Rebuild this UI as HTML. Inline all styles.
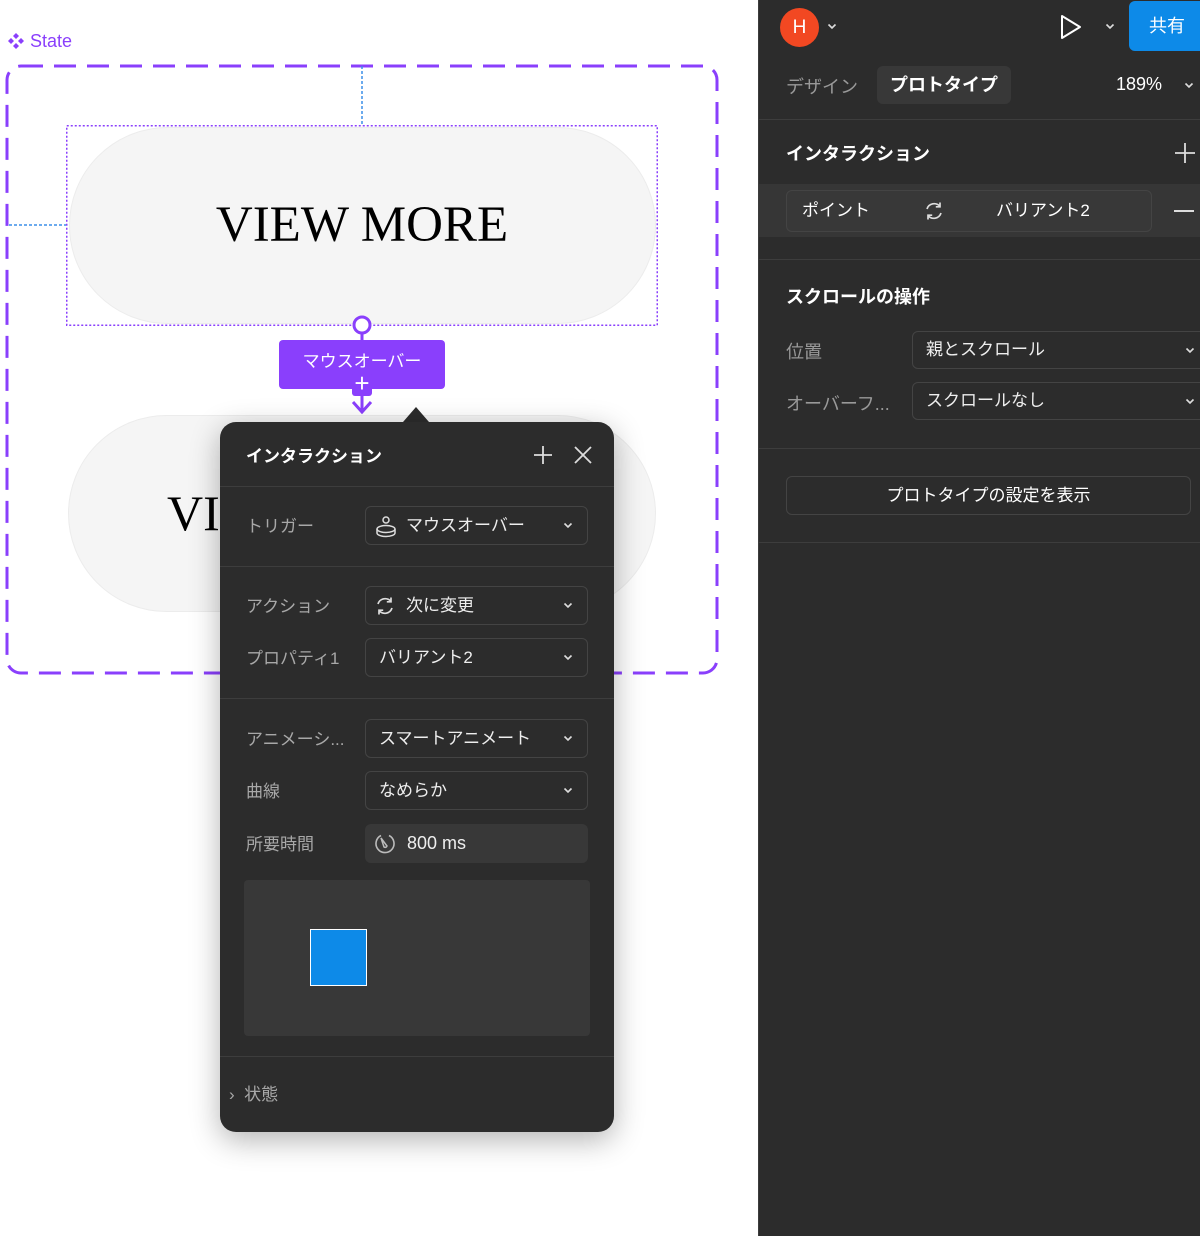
<!DOCTYPE html><html><head><meta charset="utf-8"><style>
*{margin:0;padding:0;box-sizing:border-box}
body{width:1200px;height:1236px;background:#fff;position:relative;overflow:hidden;font-family:"Liberation Sans","Noto Sans CJK JP",sans-serif}
.a{position:absolute}
.pill{position:absolute;background:#f5f5f5;border:1px solid #ececec;border-radius:100px}
.serif{font-family:"Liberation Serif",serif;color:#000}
.pop{left:220px;top:422px;width:394px;height:710px;background:#2c2c2c;border-radius:16px;box-shadow:0 8px 30px rgba(0,0,0,.3);color:#fff;font-size:17px}
.lbl{position:absolute;left:26px;color:#a8a8a8;font-size:17px;margin-top:-2px}
.sel{position:absolute;left:145px;width:223px;height:39px;border:1px solid #444;border-radius:6px;color:#eee;font-size:17px;line-height:38px;padding-left:13px}
.ch{position:absolute;right:14px;top:15px}
.rsel{position:absolute;left:153px;width:300px;height:38px;border:1px solid #444;border-radius:6px;color:#eee;font-size:17px;line-height:36px;padding-left:13px}
.hr{position:absolute;left:0;right:0;height:1px;background:#3d3d3d}
.right{left:758px;top:0;width:442px;height:1236px;background:#2c2c2c;border-left:1px solid #3d3d3d;color:#fff}
</style></head><body>
<svg width="0" height="0" style="position:absolute"><defs><symbol id="cv" viewBox="0 0 10 7"><path d="M1.5 1.5 L5 5 L8.5 1.5" fill="none" stroke="#ddd" stroke-width="1.6"/></symbol>
<symbol id="rf" viewBox="0 0 22 22"><path d="M4 9 A7.5 7.5 0 0 1 17 6.5 M17 2.5 V6.8 H12.8 M18 13 A7.5 7.5 0 0 1 5 15.5 M5 19.5 V15.2 H9.2" fill="none" stroke="#ddd" stroke-width="1.7"/></symbol></defs></svg>
<svg class="a" style="left:7px;top:32px" width="18" height="18" viewBox="0 0 18 18"><g fill="#8a3ffc"><path d="M9 1 L12 4 L9 7 L6 4Z"/><path d="M9 11 L12 14 L9 17 L6 14Z"/><path d="M4 6 L7 9 L4 12 L1 9Z"/><path d="M14 6 L17 9 L14 12 L11 9Z"/></g></svg>
<div class="a" style="left:30px;top:31px;color:#8a3ffc;font-size:18px">State</div>
<svg class="a" style="left:0;top:0" width="760" height="700">
<rect x="7" y="66" width="710" height="607" rx="14" fill="none" stroke="#8a3ffc" stroke-width="3" stroke-dasharray="22 11"/>
<line x1="362" y1="66" x2="362" y2="125" stroke="#3b8fe8" stroke-width="1.5" stroke-dasharray="3 2"/>
<line x1="9" y1="225" x2="66" y2="225" stroke="#3b8fe8" stroke-width="1.5" stroke-dasharray="3 2"/>
</svg>
<div class="pill" style="left:68px;top:415px;width:588px;height:197px"></div>
<div class="a serif" style="left:167px;top:484px;font-size:50px">VI</div>
<div class="pill" style="left:69px;top:127px;width:587px;height:197px"></div>
<div class="a serif" style="left:0;width:724px;text-align:center;top:196px;font-size:51px">VIEW MORE</div>
<svg class="a" style="left:0;top:0" width="760" height="430">
<rect x="66.75" y="125.75" width="590.5" height="199.5" fill="none" stroke="#8a3ffc" stroke-width="1.5" stroke-dasharray="2 2"/>
<circle cx="362" cy="325" r="8" fill="#fff" stroke="#8a3ffc" stroke-width="3"/>
<line x1="362" y1="333" x2="362" y2="412" stroke="#8a3ffc" stroke-width="3"/>
<path d="M353 402 L362 412 L371 402" fill="none" stroke="#8a3ffc" stroke-width="3"/>
<path d="M403 422 L416 407 L429 422Z" fill="#2c2c2c"/>
</svg>
<div class="a" style="left:279px;top:340px;width:166px;height:49px;background:#8a3ffc;border-radius:4px;color:#fff;font-size:17px;text-align:center;line-height:44px">マウスオーバー</div>
<div class="a" style="left:352px;top:372px;width:20px;height:24px;background:#8a3ffc;border-radius:3px;color:#fff;font-size:26px;line-height:22px;text-align:center">+</div>

<div class="a pop">
<div class="a" style="left:26px;top:20px;font-weight:bold;font-size:17px">インタラクション</div>
<svg class="a" style="left:313px;top:23px" width="20" height="20"><path d="M10 1V19M1 10H19" stroke="#ddd" stroke-width="1.8"/></svg>
<svg class="a" style="left:354px;top:24px" width="18" height="18"><path d="M1 1L17 17M17 1L1 17" stroke="#ddd" stroke-width="1.8"/></svg>
<div class="hr" style="top:64px"></div>
<div class="lbl" style="top:92px">トリガー</div>
<div class="sel" style="top:84px;padding-left:40px"><svg class="a" style="left:8px;top:8px" width="24" height="24" viewBox="0 0 24 24"><circle cx="12" cy="5" r="3" fill="none" stroke="#ddd" stroke-width="1.5"/><ellipse cx="12" cy="14" rx="9" ry="3.5" fill="none" stroke="#ddd" stroke-width="1.5"/><path d="M3 14V18A9 3.5 0 0 0 21 18V14" fill="none" stroke="#ddd" stroke-width="1.5"/></svg>マウスオーバー<svg class="ch" width="10" height="7"><use href="#cv"/></svg></div>
<div class="hr" style="top:144px"></div>
<div class="lbl" style="top:172px">アクション</div>
<div class="sel" style="top:164px;padding-left:40px"><svg class="a" style="left:8px;top:8px" width="22" height="22"><use href="#rf"/></svg>次に変更<svg class="ch" width="10" height="7"><use href="#cv"/></svg></div>
<div class="lbl" style="top:224px">プロパティ1</div>
<div class="sel" style="top:216px">バリアント2<svg class="ch" width="10" height="7"><use href="#cv"/></svg></div>
<div class="hr" style="top:276px"></div>
<div class="lbl" style="top:305px">アニメーシ...</div>
<div class="sel" style="top:297px">スマートアニメート<svg class="ch" width="10" height="7"><use href="#cv"/></svg></div>
<div class="lbl" style="top:357px">曲線</div>
<div class="sel" style="top:349px">なめらか<svg class="ch" width="10" height="7"><use href="#cv"/></svg></div>
<div class="lbl" style="top:410px">所要時間</div>
<div class="sel" style="top:402px;border:none;background:#383838;padding-left:42px;font-size:18px;line-height:39px">800 ms<svg class="a" style="left:8px;top:8px" width="24" height="24" viewBox="0 0 24 24"><path d="M8 3.5 A9 9 0 1 0 16 3.5" fill="none" stroke="#bbb" stroke-width="1.6"/><path d="M8 6 L14 14 A2 2 0 0 1 11 15 Z" fill="none" stroke="#bbb" stroke-width="1.5"/></svg></div>
<div class="a" style="left:24px;top:458px;width:346px;height:156px;background:#383838;border-radius:4px"></div>
<div class="a" style="left:90px;top:507px;width:57px;height:57px;background:#0d8ae8;border:1px solid #fff"></div>
<div class="hr" style="top:634px"></div>
<div class="lbl" style="left:9px;top:660px">›&nbsp; 状態</div>
</div>

<div class="a right">
<div class="a" style="left:21px;top:8px;width:39px;height:39px;border-radius:50%;background:#f24822;color:#fff;text-align:center;line-height:39px;font-size:19px">H</div>
<svg class="a" style="left:68px;top:23px" width="10" height="7"><use href="#cv"/></svg>
<svg class="a" style="left:300px;top:14px" width="24" height="26"><path d="M3 2 L21 13 L3 24Z" fill="none" stroke="#fff" stroke-width="2" stroke-linejoin="round"/></svg>
<svg class="a" style="left:346px;top:23px" width="10" height="7"><use href="#cv"/></svg>
<div class="a" style="left:370px;top:1px;width:72px;height:50px;background:#0d8ae8;border-radius:6px 0 0 6px;color:#fff;font-size:18px;line-height:50px;padding-left:20px">共有</div>
<div class="a" style="left:27px;top:73px;color:#999;font-size:18px">デザイン</div>
<div class="a" style="left:118px;top:66px;width:134px;height:38px;background:#383838;border-radius:6px;font-size:18px;font-weight:bold;line-height:38px;text-align:center">プロトタイプ</div>
<div class="a" style="left:357px;top:74px;font-size:18px">189%</div>
<svg class="a" style="left:425px;top:82px" width="10" height="7"><use href="#cv"/></svg>
<div class="hr" style="top:119px"></div>
<div class="a" style="left:27px;top:140px;font-size:18px;font-weight:bold">インタラクション</div>
<svg class="a" style="left:415px;top:142px" width="22" height="22"><path d="M11 1V21M1 11H21" stroke="#ddd" stroke-width="1.8"/></svg>
<div class="a" style="left:0;top:184px;width:442px;height:53px;background:#363636"></div>
<div class="a" style="left:27px;top:190px;width:366px;height:42px;background:#383838;border:1px solid #444;border-radius:6px;font-size:17px;line-height:40px"><span class="a" style="left:15px">ポイント</span><svg class="a" style="left:136px;top:9px" width="22" height="22"><use href="#rf"/></svg><span class="a" style="left:209px">バリアント2</span></div>
<div class="a" style="left:415px;top:210px;width:20px;height:2px;background:#ddd"></div>
<div class="hr" style="top:259px"></div>
<div class="a" style="left:27px;top:283px;font-size:18px;font-weight:bold">スクロールの操作</div>
<div class="a" style="left:27px;top:338px;color:#999;font-size:18px">位置</div>
<div class="rsel" style="top:331px">親とスクロール<svg class="ch" style="right:16px" width="10" height="7"><use href="#cv"/></svg></div>
<div class="a" style="left:27px;top:390px;color:#999;font-size:18px">オーバーフ...</div>
<div class="rsel" style="top:382px">スクロールなし<svg class="ch" style="right:16px" width="10" height="7"><use href="#cv"/></svg></div>
<div class="hr" style="top:448px"></div>
<div class="a" style="left:27px;top:476px;width:405px;height:39px;border:1px solid #444;border-radius:6px;text-align:center;line-height:37px;font-size:17px">プロトタイプの設定を表示</div>
<div class="hr" style="top:542px"></div>
</div>
</body></html>
